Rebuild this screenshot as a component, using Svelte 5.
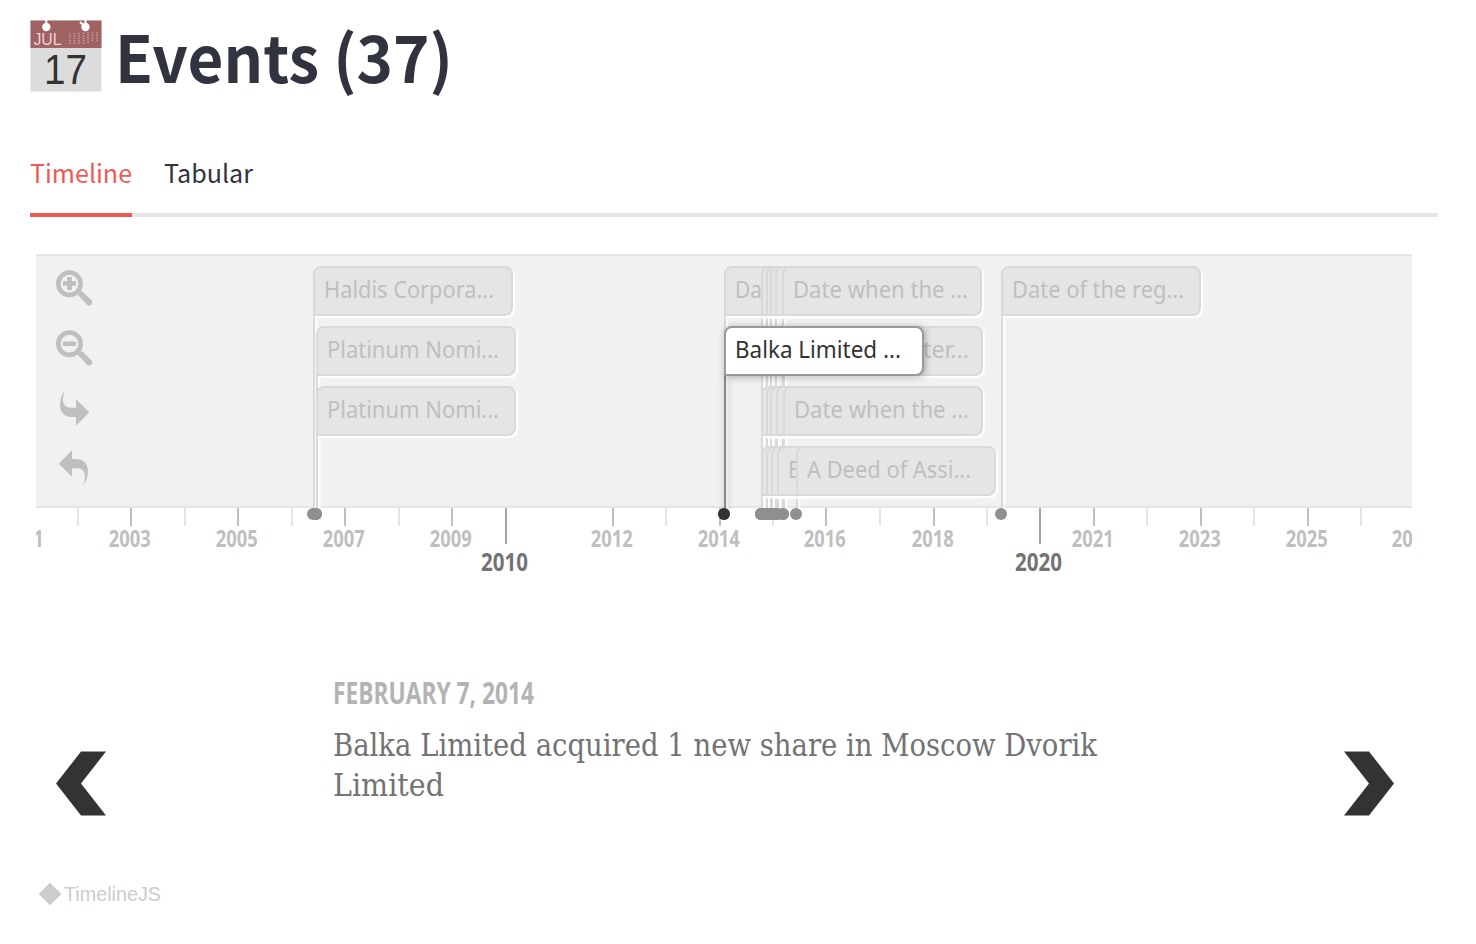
<script>
	// left is the x position inside the time nav, row is the lane
	const markers = [
		{ left: 277, row: 0, text: 'Haldis Corpora...', width: 170 },
		{ left: 280, row: 1, text: 'Platinum Nomi...', width: 172 },
		{ left: 280, row: 2, text: 'Platinum Nomi...', width: 172 },
		{ left: 688, row: 0, text: 'Da', width: 27 },
		{ left: 725, row: 0 },
		{ left: 725, row: 2 },
		{ left: 725, row: 3 },
		{ left: 730, row: 0 },
		{ left: 730, row: 2 },
		{ left: 730, row: 3 },
		{ left: 734, row: 0 },
		{ left: 734, row: 2 },
		{ left: 735, row: 3 },
		{ left: 739, row: 0 },
		{ left: 740, row: 2 },
		{ left: 741, row: 3, text: 'E', width: 12 },
		{ left: 746, row: 0, text: 'Date when the ...', width: 175 },
		{ left: 747, row: 1, text: 'ter...', width: 46, end: true },
		{ left: 747, row: 2, text: 'Date when the ...', width: 175 },
		{ left: 760, row: 3, text: 'A Deed of Assi...', width: 164 },
		{ left: 965, row: 0, text: 'Date of the reg...', width: 172 },
		{ left: 688, row: 1, text: 'Balka Limited ...', width: 166, active: true }
	];

	const ticks = [
		{ x: -12, label: '2001' },
		{ x: 42 },
		{ x: 95, label: '2003' },
		{ x: 149 },
		{ x: 202, label: '2005' },
		{ x: 256 },
		{ x: 309, label: '2007' },
		{ x: 363 },
		{ x: 416, label: '2009' },
		{ x: 470, label: '2010', major: true },
		{ x: 577, label: '2012' },
		{ x: 630 },
		{ x: 684, label: '2014' },
		{ x: 737 },
		{ x: 790, label: '2016' },
		{ x: 844 },
		{ x: 898, label: '2018' },
		{ x: 951 },
		{ x: 1004, label: '2020', major: true },
		{ x: 1058, label: '2021' },
		{ x: 1111 },
		{ x: 1165, label: '2023' },
		{ x: 1218 },
		{ x: 1272, label: '2025' },
		{ x: 1325 },
		{ x: 1378, label: '2027' }
	];

	// squeeze a text run horizontally so it takes up the given width
	function fit(node, width) {
		const natural = node.getBoundingClientRect().width;
		node.style.transform = `scaleX(${width / natural})`;
	}
</script>

<main>
	<header>
		<svg class="calendar" width="72" height="72" viewBox="0 0 72 72">
			<rect x=".5" y=".5" width="71" height="71" fill="#dcdcdc" />
			<rect x=".5" y=".5" width="71" height="27.5" fill="#a06262" />
			<path d="M16.3 0v7M50 2l5.500 5M55.500 0v7" stroke="#fff" stroke-width="2" />
			<circle cx="16.300" cy="7" r="4.200" fill="#fff" />
			<circle cx="55.500" cy="7" r="4.200" fill="#fff" />
			<text x="3.500" y="24.500" font-size="16" fill="#e9d3d3" textLength="28" lengthAdjust="spacingAndGlyphs">JUL</text>
			<path
				d="M40 24v-11M44.500 24v-11M49 24v-11M53.500 24v-12M58 23v-11M62.500 21v-9M67 21v-9"
				stroke="#c08f8f"
				stroke-width="2"
				stroke-dasharray="1.500 1"
			/>
			<text x="14" y="64" font-size="43" fill="#333" textLength="43" lengthAdjust="spacingAndGlyphs">17</text>
		</svg>
		<h1><span use:fit={338}>Events (37)</span></h1>
	</header>

	<nav class="tabs">
		<button class="selected"><span use:fit={102}>Timeline</span></button>
		<button><span use:fit={89}>Tabular</span></button>
	</nav>

	<section class="timeline">
		<div class="timenav">
			<div class="lanes">
				<div class="menubar">
					<svg width="40" height="40" viewBox="0 0 40 40">
						<circle cx="19.500" cy="18.700" r="11.200" />
						<path d="M13 16.200h4.200V12h4.700v4.200H26v4.500h-4.100V25h-4.700v-4.300H13z" />
						<path d="M27.500 29.500l4-4 10 9.800c2.500 3-1.500 7-4.500 4.500z" />
					</svg>
					<svg width="40" height="40" viewBox="0 0 40 40">
						<circle cx="19.500" cy="18.700" r="11.200" />
						<path d="M13 16.500h13v4.500H13z" />
						<path d="M27.500 29.500l4-4 10 9.800c2.500 3-1.500 7-4.500 4.500z" />
					</svg>
					<svg width="40" height="40" viewBox="0 0 40 40">
						<path d="M14.700 6C8 14 7 32 22 32h4v8.700L39.300 27.300 26 14.300v8.500h-4C12 22.800 11.500 15 14.700 6z" />
					</svg>
					<svg width="40" height="40" viewBox="0 0 40 40">
						<path
							transform="translate(48 46) rotate(180)"
							d="M14.700 6C8 14 7 32 22 32h4v8.700L39.300 27.300 26 14.300v8.500h-4C12 22.800 11.500 15 14.700 6z"
						/>
					</svg>
				</div>
			</div>

			{#each markers as m}
				<div
					class="stem"
					class:active={m.active}
					style="left: {m.left}px; top: {m.row * 60 + 60}px"
				></div>
			{/each}
			{#each markers as m}
				<div
					class="marker"
					class:active={m.active}
					class:end={m.end}
					style="left: {m.left}px; top: {m.row * 60 + 12}px"
				>
					{#if m.text}
						<span use:fit={m.width}>{m.text}</span>
					{/if}
				</div>
			{/each}
			{#each markers as m}
				<i class="dot" class:active={m.active} style="left: {m.left - 6}px"></i>
			{/each}

			{#each ticks as t}
				<div class="tick" class:labelled={t.label} class:major={t.major} style="left: {t.x - 1}px"></div>
				{#if t.label}
					<div class="year" class:major={t.major} style="left: {t.x - 1}px">
						<span use:fit={t.major ? 47 : 42}>{t.label}</span>
					</div>
				{/if}
			{/each}
		</div>

		<div class="slide">
			<svg width="50" height="65" viewBox="0 0 50 65">
				<path d="M0 32.500L25 .5h25L25 32.500l25 32H25z" />
			</svg>
			<article>
				<h3><span use:fit={201}>FEBRUARY 7, 2014</span></h3>
				<h2>
					<span use:fit={764}>Balka Limited acquired 1 new share in Moscow Dvorik</span><br />
					<span use:fit={111}>Limited</span>
				</h2>
			</article>
			<svg width="50" height="65" viewBox="0 0 50 65">
				<path d="M0 .5h25l25 32-25 32H0l25-32z" />
			</svg>
		</div>

		<footer>
			<i class="diamond"></i>
			<span use:fit={97}>TimelineJS</span>
		</footer>
	</section>
</main>

<style>
	:global(body) {
		background: #fff;
		overflow: hidden;
	}

	main {
		box-sizing: border-box;
		width: 1476px;
		height: 944px;
		padding: 20px 38px 0 30px;
		color: #31333f;
		font-family: 'Noto Sans CJK SC', 'Open Sans', sans-serif;
	}

	span {
		display: inline-block;
		white-space: pre;
		transform-origin: left;
	}

	header {
		display: flex;
		height: 130px;
	}

	.calendar {
		flex: none;
		font-family: 'Liberation Sans', Arial, sans-serif;
	}

	h1 {
		margin: 0 0 0 13px;
		font-size: 64.5px;
		line-height: 70px;
		font-weight: 700;
	}

	.tabs {
		display: flex;
		gap: 32px;
		height: 63px;
		border-bottom: 4px solid #e6e6e6;
	}

	.tabs button {
		width: 102px;
		height: 67px;
		padding: 0 0 19px;
		border: 0;
		border-bottom: 4px solid transparent;
		background: none;
		color: inherit;
		font: 25px 'Noto Sans CJK SC', sans-serif;
		line-height: 44px;
		text-align: left;
	}

	.tabs .selected {
		color: #ee5a53;
		border-bottom-color: #ee5a53;
	}

	.timeline {
		width: 1376px;
		margin: 37px 0 0 6px;
	}

	.timenav {
		position: relative;
		height: 340px;
		overflow: hidden;
	}

	.lanes {
		height: 250px;
		border-top: 2px solid #e5e5e5;
		border-bottom: 2px solid #e5e5e5;
		background: #f1f1f1;
	}

	.menubar {
		display: flex;
		flex-direction: column;
		gap: 20px;
		width: 40px;
		padding: 9px 0 0 14px;
	}

	.menubar svg {
		overflow: visible;
		fill: #bfbfbf;
	}

	.menubar circle {
		fill: none;
		stroke: #bfbfbf;
		stroke-width: 4.6;
	}

	.stem {
		position: absolute;
		bottom: 86px;
		width: 2px;
		background: #d9d9d9;
		box-shadow: 2px 2px 2px #fff;
	}

	.stem.active {
		background: #888;
		box-shadow: 1px 1px 7px rgba(0, 0, 0, 0.3);
	}

	.marker {
		position: absolute;
		box-sizing: border-box;
		width: 200px;
		height: 50px;
		padding-left: 9.4px;
		border: 2px solid #d9d9d9;
		border-radius: 8px 8px 8px 0;
		background: #e5e5e5;
		box-shadow: 2px 2px 2px #fff;
		color: #bfbfbf;
		font: 23px 'Noto Sans', 'Open Sans', sans-serif;
		line-height: 43px;
	}

	.marker.end {
		padding-left: 138px;
	}

	.marker.active {
		border-color: #999;
		background: #fff;
		box-shadow: 1px 1px 7px rgba(0, 0, 0, 0.3);
		color: #333;
	}

	.dot {
		position: absolute;
		top: 254px;
		z-index: 1;
		width: 12px;
		height: 12px;
		border-radius: 50%;
		background: #8f8f8f;
	}

	.dot.active {
		background: #333;
	}

	.tick {
		position: absolute;
		top: 254px;
		width: 2px;
		height: 18px;
		background: #e5e5e5;
	}

	.tick.labelled {
		background: #bfbfbf;
	}

	.tick.major {
		height: 36px;
		background: #a5a5a5;
	}

	.year {
		position: absolute;
		top: 272px;
		display: flex;
		justify-content: center;
		width: 0;
		color: #bfbfbf;
		font: bold 22.5px 'Open Sans', 'Noto Sans', sans-serif;
		line-height: 25px;
	}

	.year span {
		transform-origin: center;
	}

	.year.major {
		top: 294px;
		color: #737373;
		font-size: 25px;
		line-height: 26px;
	}

	.slide {
		display: flex;
		justify-content: space-between;
		height: 286px;
		padding: 0 18px 0 20px;
	}

	.slide svg {
		flex: none;
		margin-top: 157px;
		fill: #333;
	}

	article {
		width: 780px;
		margin: 81px 0 0 -5px;
	}

	h3 {
		margin: 0;
		color: #b3b3b3;
		font: bold 30px 'Open Sans', 'Noto Sans', sans-serif;
		line-height: 36px;
	}

	h2 {
		margin: 14px 0 0;
		color: #737373;
		font: 31px 'DejaVu Serif Condensed', 'DejaVu Serif', serif;
		line-height: 40px;
	}

	footer {
		display: flex;
		align-items: center;
		height: 28px;
		padding-left: 6px;
		color: #ccc;
		font: 20px 'Liberation Sans', Arial, sans-serif;
	}

	.diamond {
		width: 16px;
		height: 16px;
		margin-right: 6px;
		background: #ccc;
		transform: rotate(45deg);
	}
</style>
